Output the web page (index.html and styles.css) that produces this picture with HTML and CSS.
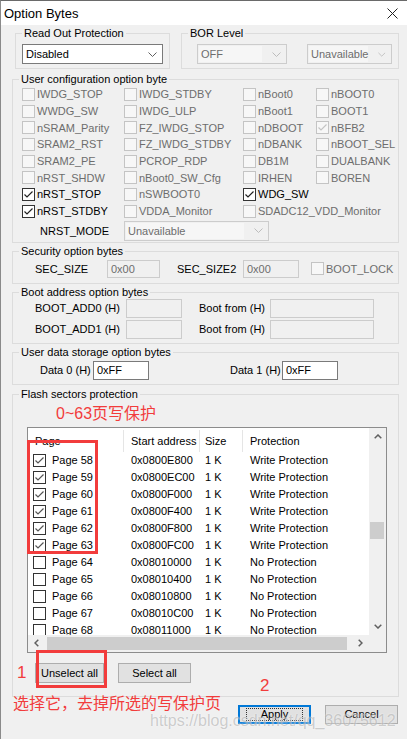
FILE: index.html
```html
<!DOCTYPE html>
<html lang="zh">
<head>
    <meta charset="UTF-8">
    <meta name="viewport" content="width=device-width, initial-scale=1.0">
    <title>Option Bytes</title>
    <link rel="stylesheet" href="styles.css">
</head>
<body>
<div class="window">
    <div class="titlebar">
        <span class="title">Option Bytes</span>
        <svg class="close" width="11" height="11" viewBox="0 0 11 11"><path d="M0.5 0.5 L10.5 10.5 M10.5 0.5 L0.5 10.5" stroke="#222" stroke-width="1" fill="none"/></svg>
    </div>

    <div class="dialog">
        <div class="top-row">
            <fieldset class="group rop">
                <legend>Read Out Protection</legend>
                <div class="combo combo-rop">
                    <span class="combo-text">Disabled</span>
                    <svg class="chev" width="9" height="5" viewBox="0 0 9 5"><path d="M0.5 0.5 L4.5 4.5 L8.5 0.5" stroke="#606060" fill="none"/></svg>
                </div>
            </fieldset>
            <fieldset class="group bor">
                <legend>BOR Level</legend>
                <div class="combo-row">
                    <div class="combo disabled combo-off">
                        <span class="combo-text">OFF</span>
                        <svg class="chev" width="9" height="5" viewBox="0 0 9 5"><path d="M0.5 0.5 L4.5 4.5 L8.5 0.5" stroke="#bcbcbc" fill="none"/></svg>
                    </div>
                    <div class="combo disabled combo-unavail">
                        <span class="combo-text">Unavailable</span>
                        <svg class="chev" width="9" height="5" viewBox="0 0 9 5"><path d="M0.5 0.5 L4.5 4.5 L8.5 0.5" stroke="#bcbcbc" fill="none"/></svg>
                    </div>
                </div>
            </fieldset>
        </div>

        <fieldset class="group user-config">
            <legend>User configuration option byte</legend>
            <div class="opt-grid">
                <div class="opt"><span class="cb"></span>IWDG_STOP</div>
                <div class="opt"><span class="cb"></span>IWDG_STDBY</div>
                <div class="opt"><span class="cb"></span>nBoot0</div>
                <div class="opt"><span class="cb"></span>nBOOT0</div>

                <div class="opt"><span class="cb"></span>WWDG_SW</div>
                <div class="opt"><span class="cb"></span>IWDG_ULP</div>
                <div class="opt"><span class="cb"></span>nBoot1</div>
                <div class="opt"><span class="cb"></span>BOOT1</div>

                <div class="opt"><span class="cb"></span>nSRAM_Parity</div>
                <div class="opt"><span class="cb"></span>FZ_IWDG_STOP</div>
                <div class="opt"><span class="cb"></span>nDBOOT</div>
                <div class="opt"><span class="cb"><svg width="11" height="11" viewBox="0 0 11 11"><path d="M1.5 5.5 L4 8 L9.5 2.5" stroke="#c4c4c4" stroke-width="1.2" fill="none"/></svg></span>nBFB2</div>

                <div class="opt"><span class="cb"></span>SRAM2_RST</div>
                <div class="opt"><span class="cb"></span>FZ_IWDG_STDBY</div>
                <div class="opt"><span class="cb"></span>nDBANK</div>
                <div class="opt"><span class="cb"></span>nBOOT_SEL</div>

                <div class="opt"><span class="cb"></span>SRAM2_PE</div>
                <div class="opt"><span class="cb"></span>PCROP_RDP</div>
                <div class="opt"><span class="cb"></span>DB1M</div>
                <div class="opt"><span class="cb"></span>DUALBANK</div>

                <div class="opt"><span class="cb"></span>nRST_SHDW</div>
                <div class="opt"><span class="cb"></span>nBoot0_SW_Cfg</div>
                <div class="opt"><span class="cb"></span>IRHEN</div>
                <div class="opt"><span class="cb"></span>BOREN</div>

                <div class="opt on"><span class="cb"><svg width="11" height="11" viewBox="0 0 11 11"><path d="M1.5 5.5 L4 8 L9.5 2.5" stroke="#222" stroke-width="1.2" fill="none"/></svg></span>nRST_STOP</div>
                <div class="opt"><span class="cb"></span>nSWBOOT0</div>
                <div class="opt on"><span class="cb"><svg width="11" height="11" viewBox="0 0 11 11"><path d="M1.5 5.5 L4 8 L9.5 2.5" stroke="#222" stroke-width="1.2" fill="none"/></svg></span>WDG_SW</div>
                <div class="opt"></div>

                <div class="opt on"><span class="cb"><svg width="11" height="11" viewBox="0 0 11 11"><path d="M1.5 5.5 L4 8 L9.5 2.5" stroke="#222" stroke-width="1.2" fill="none"/></svg></span>nRST_STDBY</div>
                <div class="opt"><span class="cb"></span>VDDA_Monitor</div>
                <div class="opt wide"><span class="cb"></span>SDADC12_VDD_Monitor</div>
            </div>
            <div class="nrst-row">
                <span class="nrst-label">NRST_MODE</span>
                <div class="combo disabled combo-nrst">
                    <span class="combo-text">Unavailable</span>
                    <svg class="chev" width="9" height="5" viewBox="0 0 9 5"><path d="M0.5 0.5 L4.5 4.5 L8.5 0.5" stroke="#bcbcbc" fill="none"/></svg>
                </div>
            </div>
        </fieldset>

        <fieldset class="group security">
            <legend>Security option bytes</legend>
            <div class="field-row">
                <span class="lbl w-sec">SEC_SIZE</span>
                <span class="edit disabled w-53">0x00</span>
                <span class="lbl w-sec2 gap-17">SEC_SIZE2</span>
                <span class="edit disabled w-56">0x00</span>
                <span class="opt boot-lock"><span class="cb"></span>BOOT_LOCK</span>
            </div>
        </fieldset>

        <fieldset class="group boot">
            <legend>Boot address option bytes</legend>
            <div class="field-row">
                <span class="lbl w-boot">BOOT_ADD0 (H)</span>
                <span class="edit disabled w-56"></span>
                <span class="lbl w-from gap-17">Boot from (H)</span>
                <span class="edit disabled w-104"></span>
            </div>
            <div class="field-row second">
                <span class="lbl w-boot">BOOT_ADD1 (H)</span>
                <span class="edit disabled w-56"></span>
                <span class="lbl w-from gap-17">Boot from (H)</span>
                <span class="edit disabled w-104"></span>
            </div>
        </fieldset>

        <fieldset class="group userdata">
            <legend>User data storage option bytes</legend>
            <div class="field-row data-row">
                <span class="lbl w-data">Data 0 (H)</span>
                <span class="edit w-56">0xFF</span>
                <span class="lbl w-data1">Data 1 (H)</span>
                <span class="edit w-56">0xFF</span>
            </div>
        </fieldset>

        <fieldset class="group flash">
            <legend>Flash sectors protection</legend>
            <div class="note-line">0~63页写保护</div>
            <div class="list">
                <div class="list-main">
                    <div class="list-head">
                        <span class="col c-page">Page</span>
                        <span class="col c-addr">Start address</span>
                        <span class="col c-size">Size</span>
                        <span class="col c-prot">Protection</span>
                    </div>
                    <div class="list-body" id="rows"></div>
                </div>
                <div class="vscroll">
                    <span class="sb-btn"><svg width="8" height="5" viewBox="0 0 8 5"><path d="M0.7 4.3 L4 1 L7.3 4.3" stroke="#606060" stroke-width="1.5" fill="none"/></svg></span>
                    <span class="sb-track"><span class="vthumb"></span></span>
                    <span class="sb-btn"><svg width="8" height="5" viewBox="0 0 8 5"><path d="M0.7 0.7 L4 4 L7.3 0.7" stroke="#606060" stroke-width="1.5" fill="none"/></svg></span>
                </div>
                <div class="hscroll">
                    <span class="sb-btn"><svg width="5" height="8" viewBox="0 0 5 8"><path d="M4.3 0.7 L1 4 L4.3 7.3" stroke="#606060" stroke-width="1.5" fill="none"/></svg></span>
                    <span class="hthumb"></span>
                    <span class="sb-btn"><svg width="5" height="8" viewBox="0 0 5 8"><path d="M0.7 0.7 L4 4 L0.7 7.3" stroke="#606060" stroke-width="1.5" fill="none"/></svg></span>
                </div>
                <div class="sb-corner"></div>
            </div>
            <div class="list-buttons">
                <button class="btn w-unsel">Unselect all</button>
                <button class="btn w-sel">Select all</button>
            </div>
        </fieldset>

        <div class="footer">
            <button class="btn btn-default"><span class="focus">Apply</span></button>
            <button class="btn">Cancel</button>
        </div>
    </div>

    <!-- annotations drawn over the dialog -->
    <div class="mark mark-pages"></div>
    <div class="mark mark-unselect"></div>
    <div class="note note-1">1</div>
    <div class="note note-2">2</div>
    <div class="note note-cn">选择它，去掉所选的写保护页</div>
    <div class="watermark">https://blog.csdn.net/qq_36075612</div>
</div>

<script>
    var rows = [
        [58, '0x0800E800', true],
        [59, '0x0800EC00', true],
        [60, '0x0800F000', true],
        [61, '0x0800F400', true],
        [62, '0x0800F800', true],
        [63, '0x0800FC00', true],
        [64, '0x08010000', false],
        [65, '0x08010400', false],
        [66, '0x08010800', false],
        [67, '0x08010C00', false],
        [68, '0x08011000', false]
    ];
    var check = '<svg width="11" height="11" viewBox="0 0 11 11"><path d="M1.5 5.5 L4 8 L9.5 2.5" stroke="#555" stroke-width="1.2" fill="none"/></svg>';
    var html = '';
    rows.forEach(function (r) {
        html += '<div class="list-row">' +
            '<span class="col c-page"><span class="cb">' + (r[2] ? check : '') + '</span>Page ' + r[0] + '</span>' +
            '<span class="col c-addr">' + r[1] + '</span>' +
            '<span class="col c-size">1 K</span>' +
            '<span class="col c-prot">' + (r[2] ? 'Write Protection' : 'No Protection') + '</span>' +
            '</div>';
    });
    document.getElementById('rows').innerHTML = html;
</script>
</body>
</html>
```

FILE: styles.css
```css
body {
    margin: 0;
    background-color: #f0f0f0;
    font-family: "Liberation Sans", Arial, sans-serif;
    font-size: 11px;
    color: #000;
}
.window {
    position: relative;
    width: 407px;
    height: 739px;
    background-color: #f0f0f0;
    overflow: hidden;
    box-sizing: border-box;
    border-left: 1px solid #8a8a8a;
    border-top: 1px solid #6a6a6a;
}
.titlebar {
    height: 24px;
    background-color: #fff;
    display: flex;
    align-items: center;
    justify-content: space-between;
    padding: 0 9px 0 3px;
}
.title {
    font-size: 13px;
}
.dialog {
    padding: 2px 8px 0 11px;
}

/* group boxes */
.group {
    margin: 0;
    padding: 0;
    min-width: 0;
    border: 1px solid #dcdcdc;
    box-sizing: border-box;
}
.group legend {
    padding: 0 2px;
    margin-left: 6px;
    line-height: 13px;
}
.top-row {
    display: flex;
    gap: 11px;
    padding-left: 3px;
}
.rop {
    width: 155px;
    padding: 4px 0 4px 0;
}
.rop .combo {
    margin-left: 6px;
}
.bor {
    width: 218px;
    padding: 4px 0 4px 0;
}
.combo-row {
    display: flex;
    gap: 20px;
    padding-left: 15px;
}

/* combo boxes */
.combo {
    height: 20px;
    box-sizing: border-box;
    border: 1px solid #7a7a7a;
    background-color: #fff;
    display: flex;
    align-items: center;
    justify-content: space-between;
    padding: 0 5px 0 3px;
}
.combo.disabled {
    border-color: #cccccc;
    background-color: #f0f0f0;
    color: #6d6d6d;
    padding-left: 1px;
}
.combo.disabled .combo-text {
    background-color: #f6f6f6;
    height: 16px;
    line-height: 16px;
    padding-left: 2px;
    flex: 1;
    margin-right: 10px;
}
.combo-rop { width: 141px; }
.combo-off { width: 90px; }
.combo-unavail { width: 85px; }
.combo-nrst { width: 145px; }

/* check boxes */
.cb {
    width: 13px;
    height: 13px;
    box-sizing: border-box;
    border: 1px solid #333;
    background-color: #fff;
    display: inline-flex;
    align-items: center;
    justify-content: center;
    flex-shrink: 0;
}
.opt {
    display: flex;
    align-items: center;
    gap: 2px;
    color: #6d6d6d;
    white-space: nowrap;
}
.opt .cb {
    border-color: #c4c4c4;
    background-color: #f7f7f7;
}
.opt.on {
    color: #000;
}
.opt.on .cb {
    border-color: #333;
    background-color: #fff;
}

.user-config {
    margin-top: 4px;
    padding: 0 0 1px 0;
}
.opt-grid {
    display: grid;
    grid-template-columns: 102px 119px 73px 1fr;
    grid-auto-rows: 16.7px;
    padding-left: 9px;
}
.opt.wide {
    grid-column: span 2;
}
.nrst-row {
    display: flex;
    align-items: center;
    margin-top: 1px;
    height: 20px;
    padding-left: 9px;
}
.nrst-label {
    width: 102px;
    padding-left: 18px;
    box-sizing: border-box;
    color: #000;
}

/* edit rows */
.security {
    margin-top: 2px;
    padding: 2px 0 5px 0;
}
.boot {
    margin-top: 2px;
    padding: 0 0 4px 0;
}
.userdata {
    margin-top: 2px;
    padding: 2px 0 4px 0;
}
.field-row {
    display: flex;
    align-items: center;
    height: 19px;
    padding-left: 22px;
}
.security .field-row {
    height: 18px;
}
.field-row.second {
    margin-top: 2px;
}
.field-row.data-row {
    padding-left: 27px;
}
.lbl {
    flex-shrink: 0;
}
.edit {
    height: 100%;
    box-sizing: border-box;
    border: 1px solid #7a7a7a;
    background-color: #fff;
    padding-left: 3px;
    display: flex;
    align-items: center;
    flex-shrink: 0;
}
.edit.disabled {
    border-color: #cccccc;
    background-color: #f0f0f0;
    color: #6d6d6d;
}
.w-sec { width: 72px; }
.w-sec2 { width: 66px; }
.w-boot { width: 91px; }
.w-from { width: 71px; }
.w-data { width: 53px; }
.w-data1 { width: 52px; margin-left: 81px; }
.w-53 { width: 53px; }
.w-56 { width: 56px; }
.w-104 { width: 104px; }
.gap-17 { margin-left: 17px; }
.boot-lock {
    margin-left: 12px;
}

/* flash sectors */
.flash {
    margin-top: 3px;
    padding: 0 0 13px 0;
}
.note-line {
    height: 26px;
    line-height: 26px;
    padding-left: 43px;
    color: #f23c3c;
    font-size: 16px;
    font-family: "Liberation Sans", "Noto Sans CJK SC", sans-serif;
}
.list {
    width: 360px;
    height: 226px;
    margin-left: 14px;
    box-sizing: border-box;
    border: 1px solid #8c8c8c;
    background-color: #fff;
    display: grid;
    grid-template-columns: 341px 17px;
    grid-template-rows: 207px 17px;
}
.list-main {
    overflow: hidden;
}
.list-head {
    display: flex;
    height: 24px;
    align-items: stretch;
}
.list-head .col {
    display: flex;
    align-items: center;
    border-right: 1px solid #e5e5e5;
    margin: 2px 0 0;
}
.list-head .c-prot {
    border-right: none;
}
.col {
    box-sizing: border-box;
    flex-shrink: 0;
    white-space: nowrap;
    padding-left: 7px;
}
.c-page { width: 96px; }
.c-addr { width: 76px; }
.c-size { width: 43px; padding-left: 5px; }
.c-prot { flex: 1; }
.list-row {
    display: flex;
    align-items: center;
    height: 17px;
}
.list-row .c-page {
    display: flex;
    align-items: center;
    gap: 6px;
    padding-left: 5px;
}
.vscroll {
    background-color: #f0f0f0;
    display: flex;
    flex-direction: column;
}
.sb-btn {
    width: 17px;
    height: 17px;
    display: flex;
    align-items: center;
    justify-content: center;
    flex-shrink: 0;
}
.sb-track {
    flex: 1;
    padding: 77px 2px 0 1px;
}
.vthumb {
    display: block;
    height: 17px;
    background-color: #cdcdcd;
}
.hscroll {
    background-color: #f0f0f0;
    display: flex;
    align-items: center;
}
.hthumb {
    height: 13px;
    width: 300px;
    margin: 0 5px 0 2px;
    background-color: #cdcdcd;
}
.sb-corner {
    background-color: #f0f0f0;
}
.list-buttons {
    display: flex;
    gap: 14px;
    margin-top: 10px;
    padding-left: 22px;
}

/* buttons */
.btn {
    height: 20px;
    box-sizing: border-box;
    border: 1px solid #adadad;
    background-color: #e1e1e1;
    font-family: "Liberation Sans", Arial, sans-serif;
    font-size: 11px;
    color: #000;
    padding: 0;
    width: 73px;
}
.w-unsel { width: 69px; }
.w-sel { width: 73px; }
.footer {
    display: flex;
    justify-content: flex-end;
    gap: 14px;
    margin-top: 8px;
    padding-right: 1px;
}
.footer .btn {
    height: 19px;
}
.btn-default {
    border-color: #0078d7;
    box-shadow: inset 0 0 0 1px #0078d7;
    display: flex;
    align-items: center;
    justify-content: center;
}
.focus {
    border: 1px dotted #333;
    padding: 0 14px;
    line-height: 11px;
}

/* annotations */
.mark {
    position: absolute;
    border: 3px solid #f23c3c;
    box-sizing: border-box;
}
.mark-pages {
    left: 26px;
    top: 439px;
    width: 71px;
    height: 114px;
}
.mark-unselect {
    left: 35px;
    top: 649px;
    width: 71px;
    height: 38px;
}
.note {
    position: absolute;
    color: #f23c3c;
    font-family: "Liberation Sans", "Noto Sans CJK SC", sans-serif;
    font-size: 16px;
    line-height: 18px;
}
.note-1 {
    left: 16px;
    top: 663px;
    font-size: 17px;
}
.note-2 {
    left: 259px;
    top: 676px;
    font-size: 17px;
}
.note-cn {
    left: 12px;
    top: 694px;
}
.watermark {
    position: absolute;
    left: 149px;
    top: 710px;
    font-size: 16px;
    line-height: 20px;
    color: rgba(150, 150, 150, 0.45);
    text-shadow: 0 0 2px rgba(255, 255, 255, 0.8);
    white-space: nowrap;
}
```
